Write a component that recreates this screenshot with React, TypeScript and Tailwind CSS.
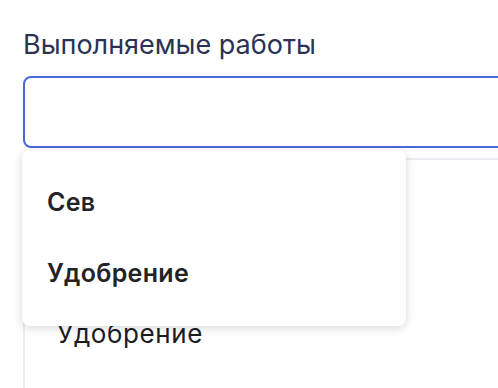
const works = ["Сев", "Удобрение"];

export default function App() {
  return (
    <div
      className="relative h-[388px] w-[498px] overflow-hidden bg-white"
      style={{ fontFamily: "Inter, 'Noto Sans', sans-serif" }}
    >
      <div className="w-[560px] pl-[23px] pt-[28px]">
        <label className="block text-[27px] leading-[34px] text-[#2b3253]">
          Выполняемые работы
        </label>
        <div className="mt-[14px] h-[72px] rounded-[8px] border-2 border-[#4a68d8] bg-white" />
        {/* list of the field behind, its first row is covered by the popup */}
        <div className="mt-[10px] h-[240px] rounded-t-[8px] border-l-2 border-t-2 border-[#ebebf1] bg-white pl-[32px] pt-[138px]">
          <div className="flex h-[71px] items-center text-[26px] tracking-[0.6px] text-[#1c1c1e]">
            Удобрение
          </div>
        </div>
      </div>

      <div className="absolute left-[22px] top-[150px] w-[384px] rounded-[8px] bg-white py-[17px] pl-[25px] shadow-[0_2px_10px_rgba(0,0,0,0.16)]">
        {works.map((w) => (
          <div
            key={w}
            className="flex h-[71px] items-center text-[25px] font-semibold tracking-[0.3px] text-[#232325]"
          >
            {w}
          </div>
        ))}
      </div>
    </div>
  );
}
